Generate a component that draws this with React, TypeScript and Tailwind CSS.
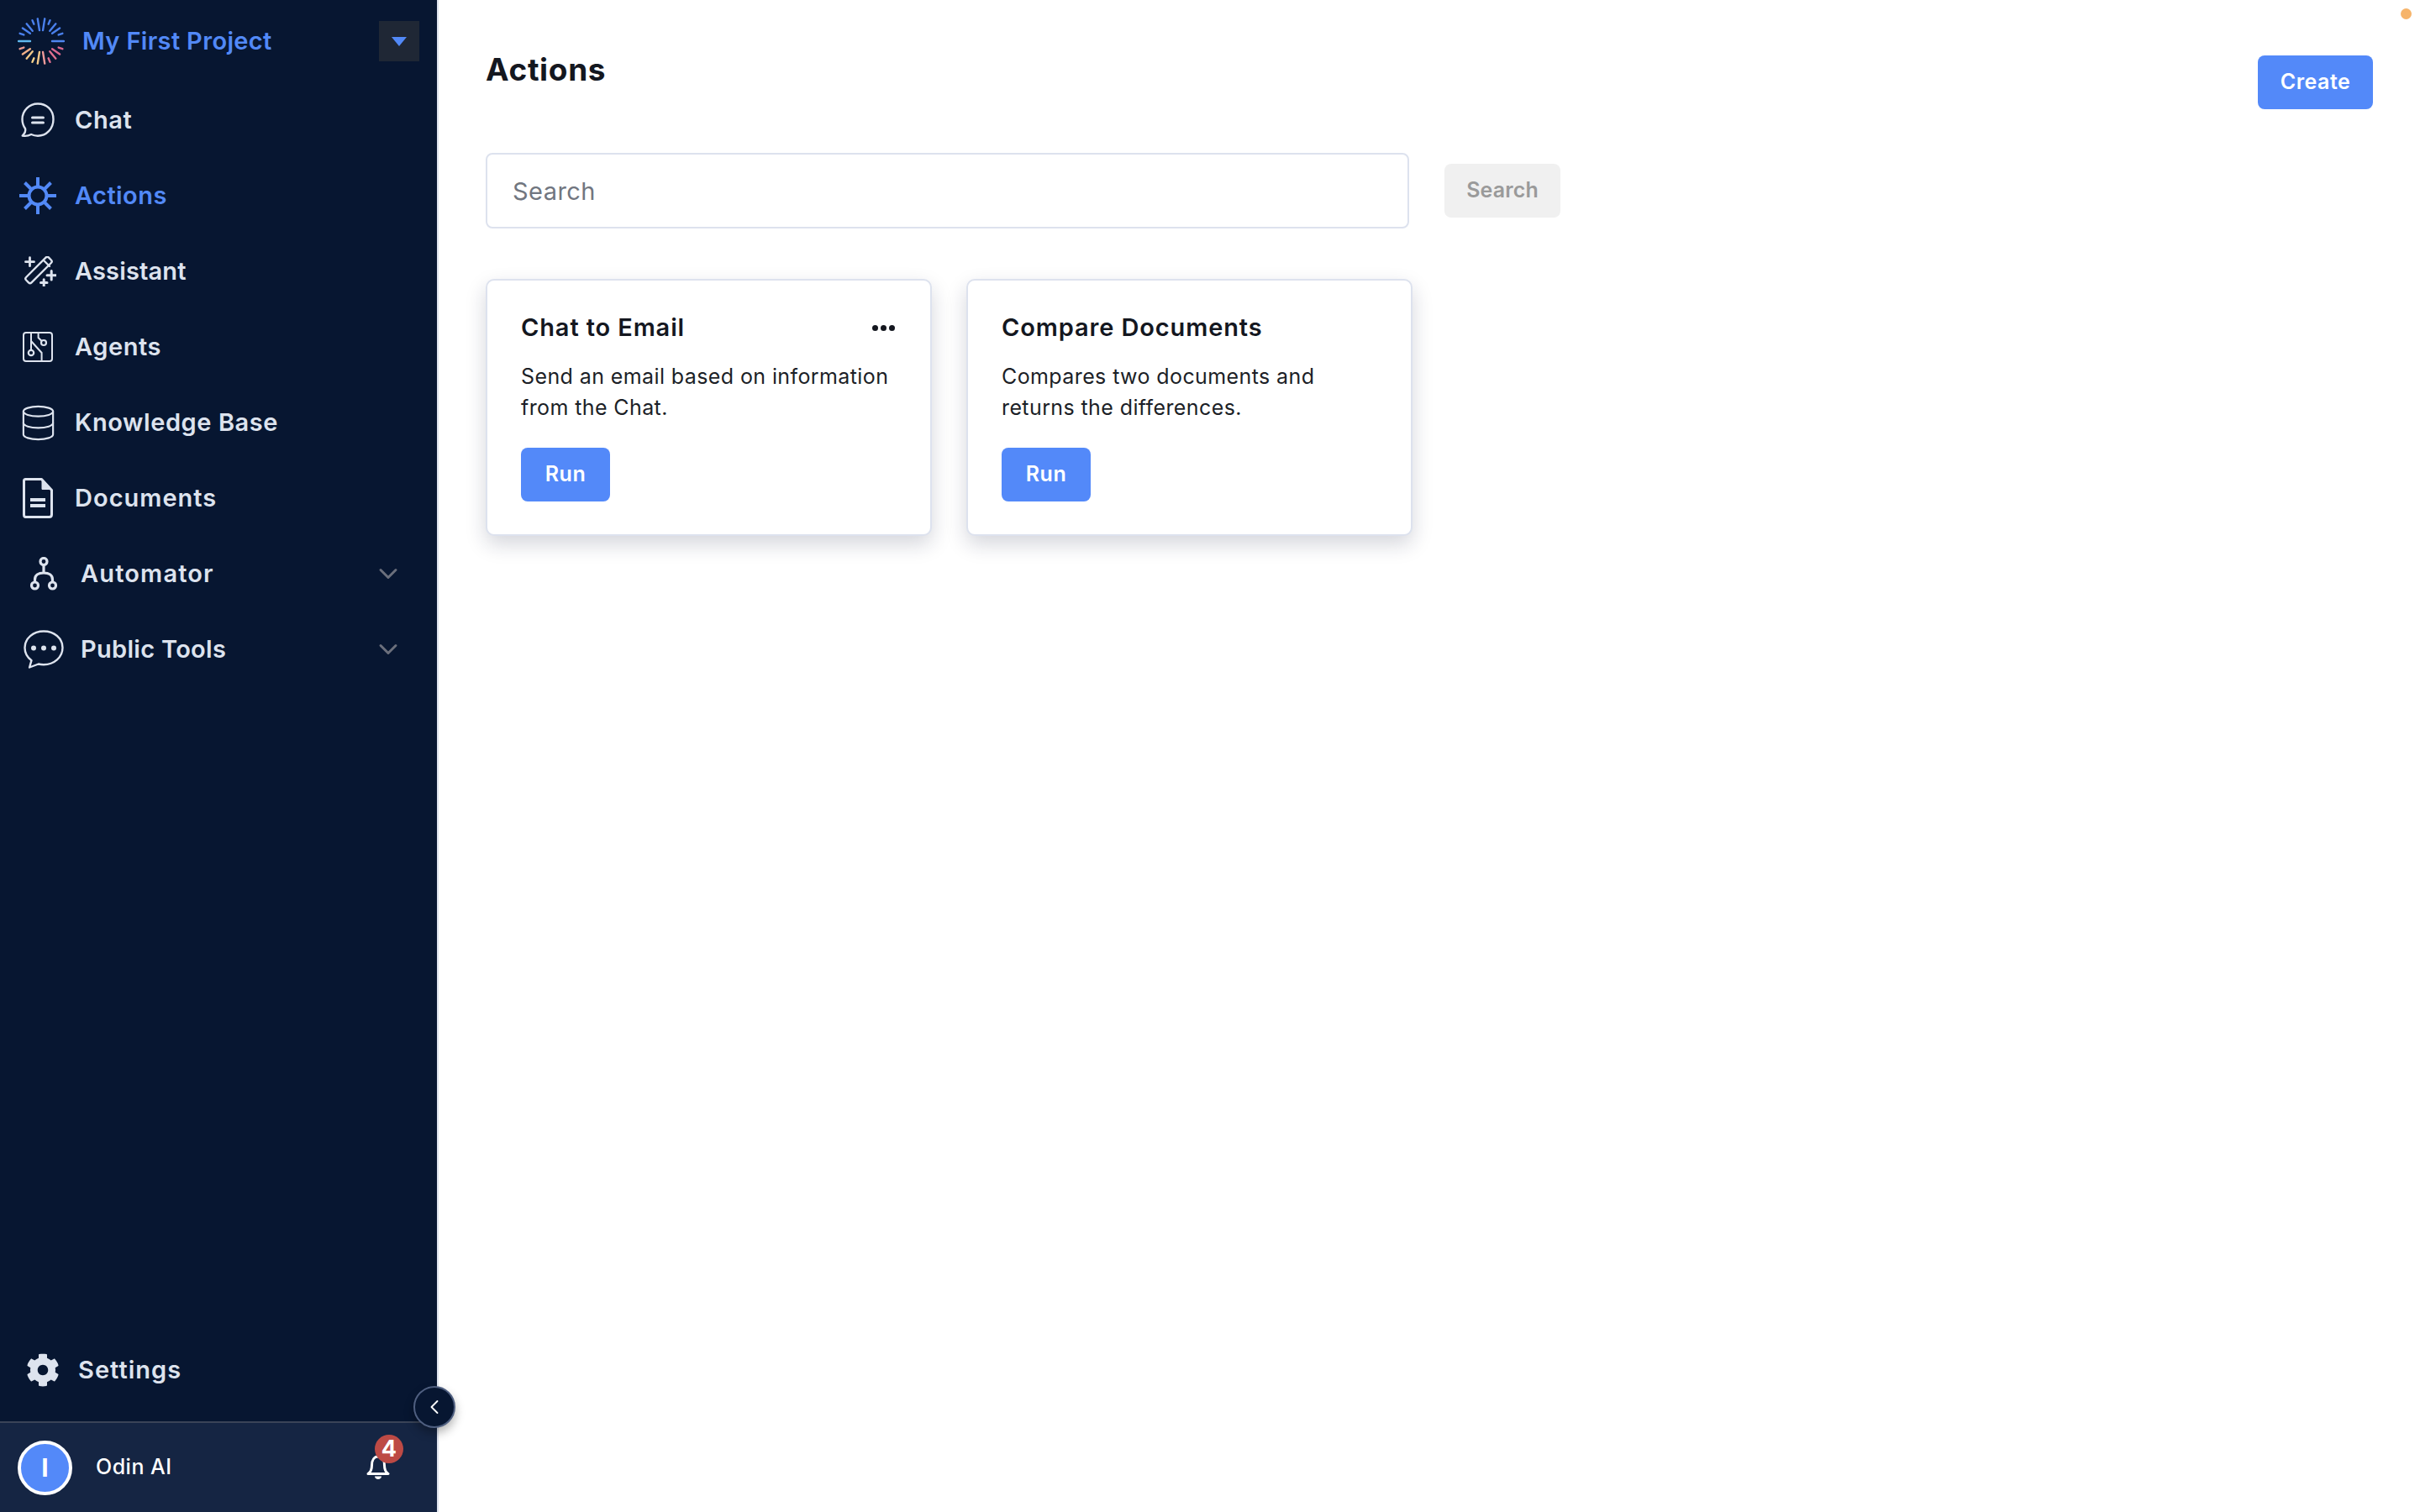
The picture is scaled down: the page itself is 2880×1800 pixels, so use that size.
import React from 'react';
import { ChevronDown, ChevronLeft, Database } from 'lucide-react';
import { FaCog } from 'react-icons/fa';

const FONT = "font-['Inter','Liberation_Sans',sans-serif]";

const rays = [
  { a: 0, inner: 13, color: '#5fb8ee' },
  { a: 20, inner: 22, color: '#4a80ec' },
  { a: 35, inner: 16, color: '#4a80ec' },
  { a: 50, inner: 16, color: '#4a80ec' },
  { a: 67, inner: 22, color: '#4a80ec' },
  { a: 81, inner: 13, color: '#4a80ec' },
  { a: 99, inner: 13, color: '#4a80ec' },
  { a: 113, inner: 22, color: '#4a80ec' },
  { a: 130, inner: 16, color: '#4a80ec' },
  { a: 145, inner: 16, color: '#4a80ec' },
  { a: 160, inner: 22, color: '#4a80ec' },
  { a: 180, inner: 13, color: '#4f86f0' },
  { a: 200, inner: 22, color: '#d9688f' },
  { a: 215, inner: 16, color: '#d9688f' },
  { a: 230, inner: 16, color: '#e0708f' },
  { a: 247, inner: 22, color: '#e0708f' },
  { a: 261, inner: 13, color: '#ef9a9a' },
  { a: 279, inner: 13, color: '#f5c98a' },
  { a: 293, inner: 22, color: '#f5d28a' },
  { a: 310, inner: 16, color: '#f0c888' },
  { a: 325, inner: 16, color: '#f0b088' },
  { a: 340, inner: 22, color: '#e89a8f' },
];

const Logo = () => (
  <svg width="56" height="56" viewBox="-28 -28 56 56" strokeWidth="2.4" strokeLinecap="round">
    {rays.map((r) => {
      const t = (r.a * Math.PI) / 180;
      const c = -Math.cos(t);
      const s = -Math.sin(t);
      return <line key={r.a} x1={c * r.inner} y1={s * r.inner} x2={c * 27} y2={s * 27} stroke={r.color} />;
    })}
  </svg>
);

const ChatIcon = () => (
  <svg width="40" height="42" viewBox="0 0 40 42" fill="none" stroke="currentColor" strokeWidth="2.4" strokeLinecap="round" strokeLinejoin="round">
    <path d="M20 1.5C9.8 1.5 1.5 9.6 1.5 20c0 4.2 1.3 8 3.6 11.2.6 2.5-.6 5.6-3.4 8.4 3.8.7 7.9-.2 10.4-1.6 2.4 1.1 5 1.7 7.9 1.7 10.2 0 18.5-8.2 18.5-19.7S30.200 1.500 20 1.500Z" />
    <path d="M13.500 18h13M13.500 24h13" strokeWidth="3" />
  </svg>
);

const SunIcon = () => (
  <svg width="44" height="44" viewBox="0 0 44 44" fill="none" stroke="currentColor" strokeWidth="4">
    <circle cx="22" cy="22" r="10.500" />
    <path d="M22 0v10M22 34v10M0 22h10M34 22h10M6.500 6.500l7.500 7.500M30 30l7.500 7.500M37.500 6.500 30 14M14 30l-7.500 7.500" />
  </svg>
);

const WandIcon = () => (
  <svg width="40" height="36" viewBox="0 0 40 36" fill="none" stroke="currentColor" strokeWidth="2.400" strokeLinecap="round" strokeLinejoin="round">
    <rect x="0" y="12" width="38" height="9" rx="2.500" transform="rotate(-45 19 16.500) translate(0 0)" />
    <path d="M25.500 5.500l6.500 6.500" />
    <path d="M3.500 6.700h10M8.500 1.700v10" strokeWidth="2.800" />
    <path d="M29 22.700h10.500M34.200 17.500v10.500" strokeWidth="3" />
    <path d="M21.500 31.500h7.500M25.200 27.800v7.500" strokeWidth="3" />
  </svg>
);

const AgentsIcon = () => (
  <svg width="36" height="36" viewBox="0 0 36 36" fill="none" stroke="currentColor" strokeWidth="2">
    <rect x="1" y="1" width="34" height="34" rx="3" />
    <path d="M18.600 1v6l3.800 3.800M10 1v10l12.600 14v10M10 11v11" />
    <circle cx="25" cy="13" r="3" strokeWidth="2.200" />
    <circle cx="10" cy="25" r="3.200" strokeWidth="2.200" />
  </svg>
);

const DocIcon = () => (
  <svg width="36" height="48" viewBox="0 0 36 48" fill="none" stroke="currentColor" strokeWidth="3" strokeLinejoin="round">
    <path d="M3.500 1.500h19l12 13v29c0 1.600-.9 3-3 3h-28c-1.300 0-2-1-2-3v-40c0-1.300.7-2 2-2Z" />
    <path d="M23 3v10.500h10" fill="currentColor" strokeWidth="1" />
    <path d="M9 26h18M9 33h18" strokeWidth="4" />
  </svg>
);

const TreeIcon = () => (
  <svg width="32" height="40" viewBox="0 0 32 40" fill="none" stroke="currentColor" strokeWidth="3.200">
    <circle cx="16" cy="5.500" r="4" />
    <circle cx="5.500" cy="34" r="4" />
    <circle cx="26.500" cy="34" r="4" />
    <path d="M16 10v9M5.500 29.500v-2.500c0-5 4-8 10.500-8s10.500 3 10.500 8v2.500" />
  </svg>
);

const BubbleIcon = () => (
  <svg width="48" height="46" viewBox="0 0 48 46" fill="none" stroke="currentColor" strokeWidth="2.400" strokeLinejoin="round">
    <path d="M24 1.500C11.500 1.500 1.500 10 1.500 21c0 6.200 3 11.600 8 15.200l-2.400 8.300 10.700-4c2 .5 4 .700 6.200.700 12.500 0 22.500-8.800 22.500-20.200S36.500 1.500 24 1.500Z" />
    <circle cx="12" cy="21.500" r="3" fill="currentColor" stroke="none" />
    <circle cx="24" cy="21.500" r="3" fill="currentColor" stroke="none" />
    <circle cx="36" cy="21.500" r="3" fill="currentColor" stroke="none" />
  </svg>
);

const BellIcon = () => (
  <svg width="28" height="30" viewBox="0 0 28 30" fill="none" stroke="white" strokeWidth="3" strokeLinejoin="round">
    <path d="M2 22.500c2.500-1.500 4.500-4 4.500-10C6.500 6 9.500 2 14 2s7.500 4 7.500 10.500c0 6 2 8.500 4.500 10Z" />
    <path d="M10 25.500h8c0 2-1.800 3.500-4 3.500s-4-1.500-4-3.500Z" fill="white" stroke="none" />
  </svg>
);

interface NavItem {
  label: string;
  icon: React.ReactNode;
  box: string;
  gap: string;
  track: string;
  active?: boolean;
  expand?: boolean;
}

const navItems: NavItem[] = [
  { label: 'Chat', icon: <ChatIcon />, box: 'w-[48px]', gap: 'ml-[20px]', track: 'tracking-[0.02em]' },
  { label: 'Actions', icon: <SunIcon />, box: 'w-[48px]', gap: 'ml-[20px]', track: 'tracking-[0.015em]', active: true },
  { label: 'Assistant', icon: <WandIcon />, box: 'w-[48px] pl-[3px]', gap: 'ml-[20px]', track: 'tracking-[0.005em]' },
  { label: 'Agents', icon: <AgentsIcon />, box: 'w-[48px]', gap: 'ml-[20px]', track: 'tracking-[0.02em]' },
  { label: 'Knowledge Base', icon: <Database size={47} strokeWidth={1.1} className="shrink-0" />, box: 'w-[48px]', gap: 'ml-[20px]', track: 'tracking-[0.02em]' },
  { label: 'Documents', icon: <DocIcon />, box: 'w-[48px]', gap: 'ml-[20px]', track: 'tracking-[0.035em]' },
  { label: 'Automator', icon: <TreeIcon />, box: 'w-[62px]', gap: 'ml-[13px]', track: 'tracking-[0.04em]', expand: true },
  { label: 'Public Tools', icon: <BubbleIcon />, box: 'w-[62px]', gap: 'ml-[13px]', track: 'tracking-[0.01em]', expand: true },
];

const Card: React.FC<{ title: string; text: string[]; menu?: boolean }> = ({ title, text, menu }) => (
  <div className="w-[531px] h-[306px] bg-white border-2 border-[#dde2ee] rounded-[10px] shadow-[0_10px_24px_rgba(20,30,60,0.18)] pt-[40px] px-[40px]">
    <div className="flex items-center justify-between h-[32px]">
      <h3 className="text-[29px] leading-[32px] font-semibold tracking-[0.03em] text-[#14171f]">{title}</h3>
      {menu && (
        <div className="flex gap-[3px] mr-[2px]">
          <span className="w-[7px] h-[7px] rounded-full bg-[#14171f]" />
          <span className="w-[7px] h-[7px] rounded-full bg-[#14171f]" />
          <span className="w-[7px] h-[7px] rounded-full bg-[#14171f]" />
        </div>
      )}
    </div>
    <p className="mt-[24px] text-[25px] leading-[37px] tracking-[0.016em] text-[#1c1f27]">
      {text[0]}
      <br />
      {text[1]}
    </p>
    <button className="mt-[29px] block w-[106px] h-[64px] rounded-[8px] bg-[#5389f9] text-white text-[25px] font-semibold tracking-[0.02em]">
      Run
    </button>
  </div>
);

const App: React.FC = () => {
  return (
    <div className={`relative flex w-[2880px] h-[1800px] overflow-hidden bg-white ${FONT}`}>
      <span className="absolute right-[10px] top-[10px] w-[13px] h-[13px] rounded-full bg-[#f6b46a]" />

      <aside className="relative flex flex-col w-[522px] h-full shrink-0 bg-[#071631] border-r-2 border-[#dde2ee]">
        <div className="flex items-center h-[98px] pl-[21px] pr-[21px]">
          <Logo />
          <span className="ml-[21px] text-[29px] font-semibold tracking-[0.012em] text-[#5289f7]">My First Project</span>
          <div className="ml-auto flex items-center justify-center w-[48px] h-[48px] bg-[#1f2735]">
            <span className="w-0 h-0 border-x-[9px] border-x-transparent border-t-[11px] border-t-[#5289f7]" />
          </div>
        </div>

        <nav className="flex flex-col">
          {navItems.map((item) => (
            <div
              key={item.label}
              className={`flex items-center h-[90px] pl-[21px] ${item.active ? 'text-[#5289f7]' : 'text-[#dde3ee]'}`}
            >
              <div className={`flex items-center justify-center shrink-0 ${item.box}`}>{item.icon}</div>
              <span className={`${item.gap} text-[29px] font-semibold ${item.track}`}>{item.label}</span>
              {item.expand && <ChevronDown size={36} strokeWidth={2} className="ml-auto mr-[40px] text-[#6b6f7c]" />}
            </div>
          ))}
        </nav>

        <div className="flex-1" />

        <div className="flex items-center h-[90px] pl-[31px] mb-[16px] text-[#dde3ee]">
          <FaCog size={40} />
          <span className="ml-[22px] text-[29px] font-semibold tracking-[0.035em]">Settings</span>
        </div>

        <div className="flex items-center h-[108px] pl-[21px] bg-[#152543] border-t-2 border-[#3a4458]">
          <div className="flex items-center justify-center w-[65px] h-[65px] rounded-full bg-[#5389f9] border-4 border-white text-white text-[30px] font-bold">
            I
          </div>
          <span className="ml-[28px] text-[25px] font-medium tracking-[0.02em] text-white">Odin AI</span>
          <div className="relative ml-auto mr-[56px]">
            <BellIcon />
            <span className="absolute left-[10px] top-[-24px] flex items-center justify-center w-[34px] h-[34px] rounded-full bg-[#bd4a45] text-white text-[27px] font-bold">
              4
            </span>
          </div>
        </div>

        <button className="absolute left-[492px] top-[1650px] flex items-center justify-center w-[50px] h-[50px] rounded-full bg-[#071631] border-2 border-[#4f5f80] text-white shadow-[0_6px_12px_rgba(0,0,0,0.3)]">
          <ChevronLeft size={28} strokeWidth={1.6} />
        </button>
      </aside>

      <main className="flex-1 px-[56px]">
        <div className="flex items-start justify-between pt-[62px]">
          <h1 className="text-[37px] leading-[42px] font-bold tracking-[0.018em] text-[#14171f]">Actions</h1>
          <button className="mt-[4px] w-[137px] h-[64px] rounded-[8px] bg-[#5389f9] text-white text-[25px] font-semibold tracking-[0.02em]">
            Create
          </button>
        </div>

        <div className="flex items-center gap-[42px] mt-[52px]">
          <input
            placeholder="Search"
            className="w-[1099px] h-[90px] px-[30px] rounded-[8px] border-2 border-[#dde2ee] bg-white text-[29px] tracking-[0.015em] outline-none placeholder:text-[#717680]"
          />
          <button className="w-[138px] h-[64px] rounded-[8px] bg-[#f0f0f0] text-[#9a9a9a] text-[25px] font-semibold tracking-[0.005em]">
            Search
          </button>
        </div>

        <div className="flex gap-[41px] mt-[60px]">
          <Card title="Chat to Email" text={['Send an email based on information', 'from the Chat.']} menu />
          <Card title="Compare Documents" text={['Compares two documents and', 'returns the differences.']} />
        </div>
      </main>
    </div>
  );
};

export default App;
